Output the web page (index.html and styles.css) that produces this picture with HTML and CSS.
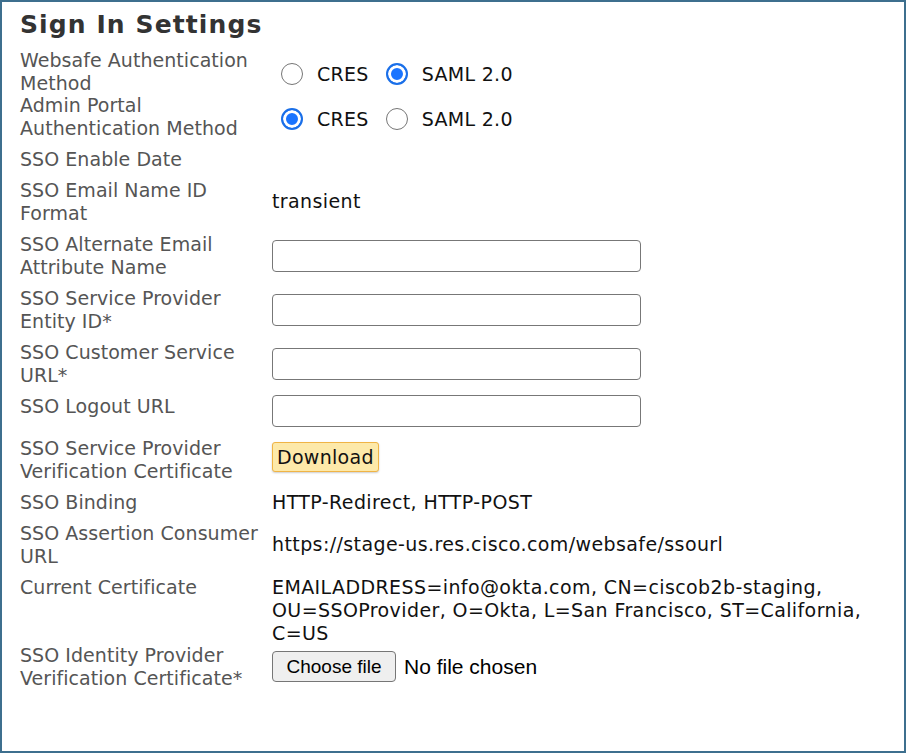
FILE: index.html
```html
<!DOCTYPE html>
<html lang="en">
<head>
  <meta charset="UTF-8">
  <meta name="viewport" content="width=device-width, initial-scale=1">
  <title>Sign In Settings</title>
  <link rel="stylesheet" href="styles.css">
</head>
<body>

<div class="panel">
  <h3 class="title">Sign In Settings</h3>

  <div class="row first">
    <div class="label">Websafe Authentication<br>Method</div>
    <div class="value radios">
      <input type="radio" id="wsCres" name="websafe">
      <label for="wsCres">CRES</label>
      <input type="radio" id="wsSaml" name="websafe" checked>
      <label for="wsSaml">SAML 2.0</label>
    </div>
  </div>

  <div class="row tight">
    <div class="label">Admin Portal<br>Authentication Method</div>
    <div class="value radios">
      <input type="radio" id="apCres" name="admin" checked>
      <label for="apCres">CRES</label>
      <input type="radio" id="apSaml" name="admin">
      <label for="apSaml">SAML 2.0</label>
    </div>
  </div>

  <div class="row">
    <div class="label">SSO Enable Date</div>
    <div class="value"></div>
  </div>

  <div class="row">
    <div class="label">SSO Email Name ID<br>Format</div>
    <div class="value">transient</div>
  </div>

  <div class="row">
    <div class="label">SSO Alternate Email<br>Attribute Name</div>
    <div class="value"><input type="text" class="field"></div>
  </div>

  <div class="row">
    <div class="label">SSO Service Provider<br>Entity ID*</div>
    <div class="value"><input type="text" class="field"></div>
  </div>

  <div class="row">
    <div class="label">SSO Customer Service<br>URL*</div>
    <div class="value"><input type="text" class="field"></div>
  </div>

  <div class="row">
    <div class="label">SSO Logout URL</div>
    <div class="value"><input type="text" class="field"></div>
  </div>

  <div class="row wide">
    <div class="label">SSO Service Provider<br>Verification Certificate</div>
    <div class="value"><button class="download">Download</button></div>
  </div>

  <div class="row">
    <div class="label">SSO Binding</div>
    <div class="value">HTTP-Redirect, HTTP-POST</div>
  </div>

  <div class="row">
    <div class="label">SSO Assertion Consumer<br>URL</div>
    <div class="value">https://stage-us.res.cisco.com/websafe/ssourl</div>
  </div>

  <div class="row">
    <div class="label">Current Certificate</div>
    <div class="value">EMAILADDRESS=info@okta.com, CN=ciscob2b-staging,<br>OU=SSOProvider, O=Okta, L=San Francisco, ST=California,<br>C=US</div>
  </div>

  <div class="row tight">
    <div class="label">SSO Identity Provider<br>Verification Certificate*</div>
    <div class="value file">
      <button class="choose">Choose file</button>
      <span class="no-file">No file chosen</span>
    </div>
  </div>
</div>

</body>
</html>
```

FILE: styles.css
```css
*, *::before, *::after {
  box-sizing: border-box;
}

body {
  font-family: "DejaVu Sans", Verdana, sans-serif;
  background-color: #ffffff;
  margin: 0;
}

.panel {
  width: 906px;
  height: 753px;
  border: 2px solid #3d6f8e;
  padding: 9px 18px 0 18px;
}

.title {
  margin: 0 0 9.5px 0;
  font-size: 25px;
  line-height: 28px;
  letter-spacing: 1.1px;
  color: #333;
}

.row {
  display: flex;
  align-items: center;
  margin-top: 8px;
  font-size: 19px;
  line-height: 23px;
}

.row.first {
  margin-top: 0;
}

.row.tight {
  margin-top: -1px;
}

.row.wide {
  margin-top: 10px;
}

.label {
  width: 252px;
  flex: none;
  align-self: flex-start;
  color: #555;
  letter-spacing: 0.05px;
}

.value {
  flex: 1;
  color: #111;
  letter-spacing: 0.4px;
}

.radios {
  display: flex;
  align-items: center;
  padding-top: 5px;
  letter-spacing: 0.3px;
}

.radios input[type="radio"] {
  appearance: none;
  -webkit-appearance: none;
  width: 22px;
  height: 22px;
  margin: 0 14px 0 9px;
  border: 1.5px solid #767676;
  border-radius: 50%;
  background: #fff;
}

.radios label + input[type="radio"] {
  margin-left: 17px;
}

.radios input[type="radio"]:checked {
  border: 2px solid #1a6fe8;
  background: #1a74ff;
  box-shadow: inset 0 0 0 3px #fff;
}

.field {
  display: block;
  width: 369px;
  height: 32px;
  border: 1.5px solid #777;
  border-radius: 4px;
  font-size: 16px;
}

.download {
  font-family: "DejaVu Sans", Verdana, sans-serif;
  font-size: 19px;
  letter-spacing: 0.3px;
  color: #111;
  height: 30px;
  margin-bottom: 6px;
  padding: 0 4px;
  background: #fde9a9;
  border: 1.5px solid #f0b445;
  border-radius: 3px;
  box-shadow: 0 1px 2px rgba(0,0,0,0.2);
}

.file {
  display: flex;
  align-items: center;
  font-family: "Liberation Sans", Arial, sans-serif;
  letter-spacing: 0;
}

.choose {
  font-family: "Liberation Sans", Arial, sans-serif;
  font-size: 19px;
  color: #000;
  width: 124px;
  height: 31px;
  padding: 0;
  background: #efefef;
  border: 1px solid #767676;
  border-radius: 4px;
}

.no-file {
  margin-left: 8px;
  font-size: 21px;
  color: #000;
}
```
